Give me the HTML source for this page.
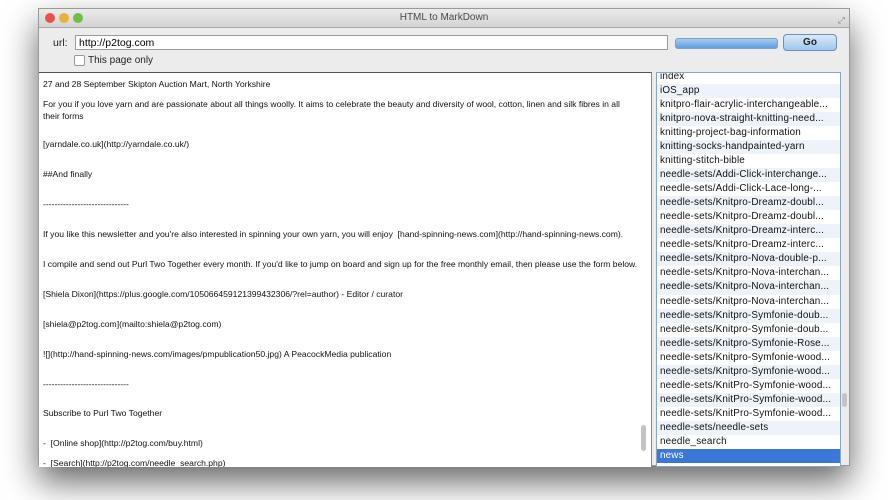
<!DOCTYPE html><html><head><style>
body{margin:0;width:888px;height:500px;background:#fff;position:relative;overflow:hidden;font-family:"Liberation Sans",sans-serif}
.win{position:absolute;left:38px;top:8px;width:812px;height:458px;background:#ececec;box-shadow:0 16px 32px rgba(0,0,0,.6);border:1px solid #9a9a9a;box-sizing:border-box}
.tb{position:absolute;left:0;top:0;right:0;height:18px;background:linear-gradient(#ebebeb,#d3d3d3);border-bottom:1px solid #a8a8a8;text-align:center;font-size:10px;line-height:18px;color:#4a4a4a}
.dot{position:absolute;top:4px;width:10px;height:10px;border-radius:50%}
.lp{position:absolute;left:0;top:63px;width:612px;height:394px;background:#fff;border-top:1px solid #555;border-right:1px solid #888;overflow:hidden;font-size:8.6px;color:#111}
.lp div{position:absolute;left:4px;white-space:nowrap}
.rp{position:absolute;left:617px;top:63px;width:183px;height:393px;background:#fff;border:1px solid #8aa5c8;overflow:hidden;font-size:9.9px;color:#111}
.rp div{height:14.04px;line-height:14.04px;padding-left:3px;white-space:nowrap;letter-spacing:0.15px}
.rp div:nth-child(even){background:#eef3fa}
</style></head><body>
<div class="win">
<div class="tb">HTML to MarkDown
<div class="dot" style="left:6px;background:#e8524a"></div><div class="dot" style="left:20px;background:#e9b13a"></div><div class="dot" style="left:34px;background:#6fbe46"></div>
<div style="position:absolute;right:4px;top:2px;font-size:9px;color:#888">⤢</div></div>
<div style="position:absolute;left:14px;top:28px;font-size:10.5px;color:#222">url:</div>
<div style="position:absolute;left:36px;top:26px;width:593px;background:#fff;border:1px solid #9a9a9a;font-size:10.5px;line-height:14px;padding-left:3px;box-sizing:border-box;height:15px">http://p2tog.com</div>
<div style="position:absolute;left:636px;top:29px;width:101px;height:9px;border-radius:3px;border:1px solid #7f9fc4;background:linear-gradient(#a6cdf0,#5d9ee0)"></div>
<div style="position:absolute;left:744px;top:25px;width:52px;height:15px;border-radius:4px;border:1px solid #6b8fba;background:linear-gradient(#d9e9f9,#9ec7ee);font-size:10px;text-align:center;line-height:15px;font-weight:bold;color:#222">Go</div>
<div style="position:absolute;left:35px;top:46px;width:9px;height:9px;border:1px solid #999;border-radius:2px;background:#fff"></div>
<div style="position:absolute;left:49px;top:46px;font-size:10px;color:#222">This page only</div>
<div class="lp">
<div style="top:6px">27 and 28 September Skipton Auction Mart, North Yorkshire</div>
<div style="top:26px">For you if you love yarn and are passionate about all things woolly. It aims to celebrate the beauty and diversity of wool, cotton, linen and silk fibres in all</div>
<div style="top:38px">their forms</div>
<div style="top:66px">[yarndale.co.uk](http://yarndale.co.uk/)</div>
<div style="top:96px">##And finally</div>
<div style="top:126px">------------------------------</div>
<div style="top:156px">If you like this newsletter and you're also interested in spinning your own yarn, you will enjoy &nbsp;[hand-spinning-news.com](http://hand-spinning-news.com).</div>
<div style="top:186px">I compile and send out Purl Two Together every month. If you'd like to jump on board and sign up for the free monthly email, then please use the form below.</div>
<div style="top:216px">[Shiela Dixon](https://plus.google.com/105066459121399432306/?rel=author) - Editor / curator</div>
<div style="top:246px">[shiela@p2tog.com](mailto:shiela@p2tog.com)</div>
<div style="top:276px">![](http://hand-spinning-news.com/images/pmpublication50.jpg) A PeacockMedia publication</div>
<div style="top:306px">------------------------------</div>
<div style="top:335px">Subscribe to Purl Two Together</div>
<div style="top:365px">- &nbsp;[Online shop](http://p2tog.com/buy.html)</div>
<div style="top:385px">- &nbsp;[Search](http://p2tog.com/needle_search.php)</div>
<div style="left:602px;top:352px;width:5px;height:26px;border-radius:3px;background:#c4c4c4"></div>
</div>
<div class="rp"><div style="margin-top:-3px;background:#fff">index</div><div>iOS_app</div><div>knitpro-flair-acrylic-interchangeable...</div><div>knitpro-nova-straight-knitting-need...</div><div>knitting-project-bag-information</div><div>knitting-socks-handpainted-yarn</div><div>knitting-stitch-bible</div><div>needle-sets/Addi-Click-interchange...</div><div>needle-sets/Addi-Click-Lace-long-...</div><div>needle-sets/Knitpro-Dreamz-doubl...</div><div>needle-sets/Knitpro-Dreamz-doubl...</div><div>needle-sets/Knitpro-Dreamz-interc...</div><div>needle-sets/Knitpro-Dreamz-interc...</div><div>needle-sets/Knitpro-Nova-double-p...</div><div>needle-sets/Knitpro-Nova-interchan...</div><div>needle-sets/Knitpro-Nova-interchan...</div><div>needle-sets/Knitpro-Nova-interchan...</div><div>needle-sets/Knitpro-Symfonie-doub...</div><div>needle-sets/Knitpro-Symfonie-doub...</div><div>needle-sets/Knitpro-Symfonie-Rose...</div><div>needle-sets/Knitpro-Symfonie-wood...</div><div>needle-sets/Knitpro-Symfonie-wood...</div><div>needle-sets/KnitPro-Symfonie-wood...</div><div>needle-sets/KnitPro-Symfonie-wood...</div><div>needle-sets/KnitPro-Symfonie-wood...</div><div>needle-sets/needle-sets</div><div>needle_search</div><div style="background:#3a77d6;color:#fff">news</div><div>nz</div></div>
<div style="position:absolute;left:803px;top:384px;width:5px;height:14px;border-radius:3px;background:#c4c4c4"></div>
</div>
</body></html>
